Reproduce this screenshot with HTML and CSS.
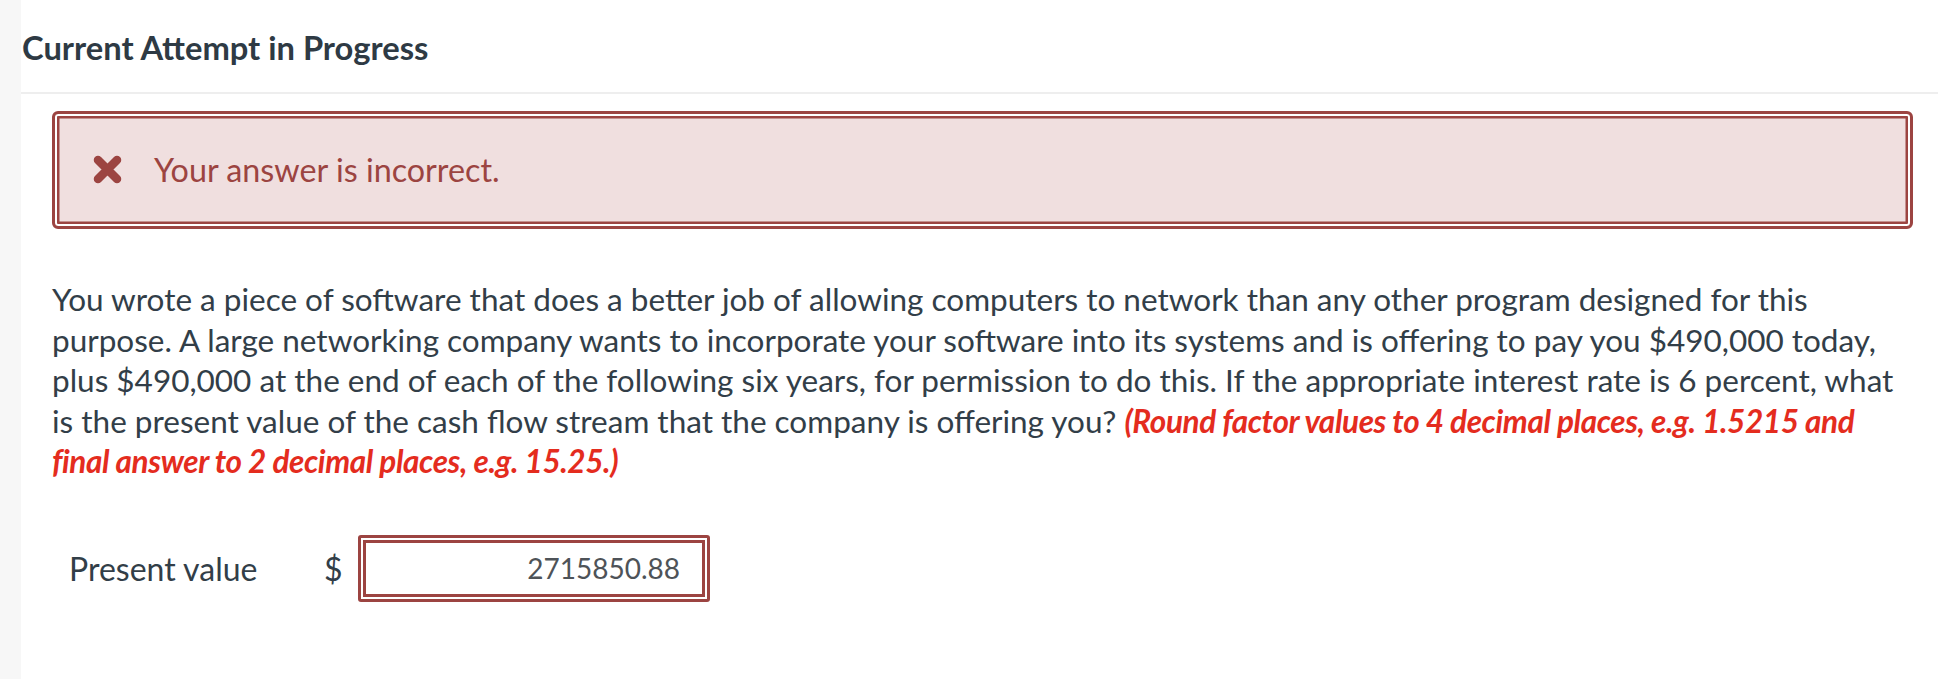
FILE: index.html
```html
<!DOCTYPE html>
<html>
<head>
<meta charset="utf-8">
<link rel="stylesheet" href="styles.css">
</head>
<body>
<div class="page">
  <div class="rail"></div>
  <div class="main">
    <div class="header">
      <h2 class="title">Current Attempt in Progress</h2>
    </div>
    <div class="content">
      <div class="alert">
        <svg class="x-icon" viewBox="0 0 29 29" width="29" height="29" aria-hidden="true">
          <path d="M5 5 L24 24 M24 5 L5 24" fill="none" stroke="#9c4441" stroke-width="8.5" stroke-linecap="round"/>
        </svg>
        <span class="alert-text">Your answer is incorrect.</span>
      </div>
      <p class="question">You wrote a piece of software that does a better job of allowing computers to network than any other program designed for this purpose. A large networking company wants to incorporate your software into its systems and is offering to pay you $490,000 today, plus $490,000 at the end of each of the following six years, for permission to do this. If the appropriate interest rate is 6 percent, what is the present value of the cash flow stream that the company is offering you? <strong class="hint">(Round factor values to 4 decimal places, e.g. 1.5215 and final answer to 2 decimal places, e.g. 15.25.)</strong></p>
      <div class="answer-row">
        <span class="label">Present value</span>
        <span class="currency">$</span>
        <div class="input-box"><span class="input-value">2715850.88</span></div>
      </div>
    </div>
  </div>
</div>
</body>
</html>
```

FILE: styles.css
```css
html, body {
  margin: 0;
  padding: 0;
  background: #ffffff;
}
body {
  font-family: Lato, "Open Sans", "Liberation Sans", sans-serif;
  color: #323e48;
}
.page {
  display: flex;
  min-height: 679px;
}
.rail {
  width: 21px;
  flex: none;
  background: #f7f7f7;
}
.main {
  flex: 1;
  min-width: 0;
}
.header {
  height: 94px;
  border-bottom: 2px solid #eeeeee;
  box-sizing: border-box;
  display: flex;
  align-items: center;
  padding-left: 1px;
}
.title {
  margin: 0;
  font-size: 32.7px;
  font-weight: 700;
  color: #2e3a44;
  padding-top: 3px;
}
.content {
  padding: 17px 25px 0 31px;
}
.alert {
  height: 118px;
  box-sizing: border-box;
  border: 3px solid #9c4441;
  border-radius: 6px;
  background: #f0dfdf;
  box-shadow: inset 0 0 0 2px #ffffff, inset 0 0 0 4.5px #9c4441;
  display: flex;
  align-items: center;
  padding-left: 38px;
}
.x-icon {
  flex: none;
  margin-right: 32px;
  margin-top: -2px;
}
.alert-text {
  font-size: 32.3px;
  color: #9c4441;
  padding-bottom: 2px;
}
.question {
  margin: 50px 0 0 0;
  font-size: 31.5px;
  line-height: 40.5px;
  color: #323e48;
}
.hint {
  font-style: italic;
  font-weight: 700;
  color: #e42c1e;
  letter-spacing: -0.4px;
}
.answer-row {
  display: flex;
  align-items: center;
  margin-top: 53px;
  padding-left: 17px;
}
.label {
  font-size: 32px;
  width: 255px;
}
.currency {
  font-size: 32px;
  width: 34px;
}
.input-box {
  width: 352px;
  height: 67px;
  box-sizing: border-box;
  border: 3px solid #9c4441;
  border-radius: 3px;
  box-shadow: inset 0 0 0 2px #ffffff, inset 0 0 0 5px #9c4441;
  display: flex;
  align-items: center;
  justify-content: flex-end;
  padding-right: 27px;
}
.input-value {
  font-size: 28px;
  color: #4e5358;
}
```
